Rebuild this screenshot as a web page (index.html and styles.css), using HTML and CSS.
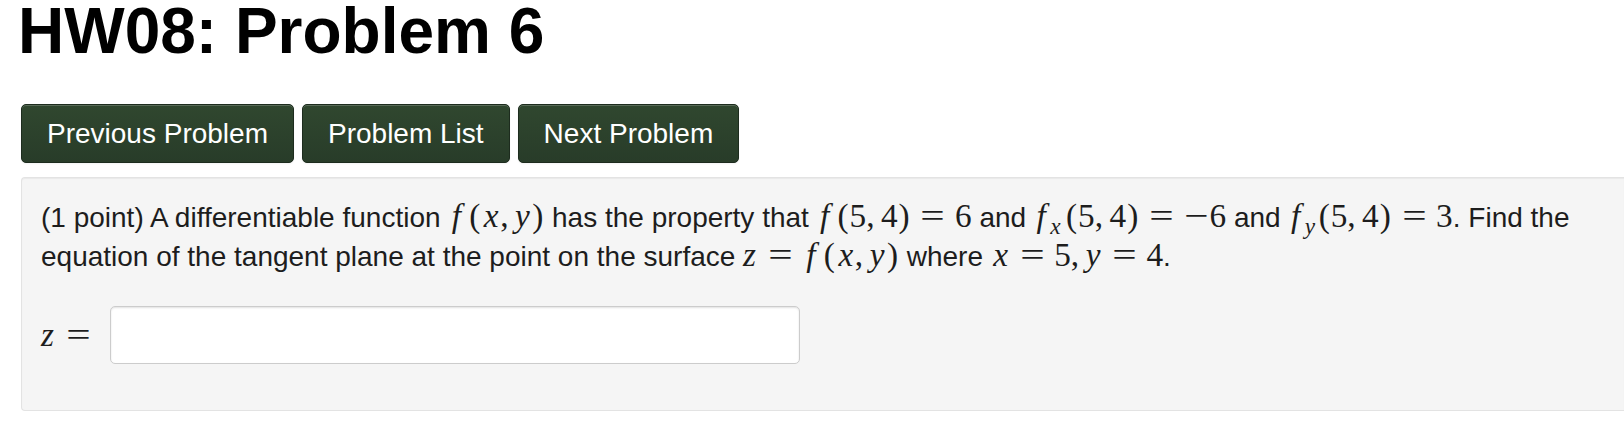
FILE: index.html
```html
<!DOCTYPE html>
<html lang="en">
<head>
    <meta charset="UTF-8">
    <title>HW08: Problem 6</title>
    <link rel="stylesheet" href="styles.css">
</head>
<body>
    <div class="page">
        <h1 class="title">HW08: Problem 6</h1>
        <div class="nav">
            <a class="btn" href="#">Previous Problem</a>
            <a class="btn" href="#">Problem List</a>
            <a class="btn" href="#">Next Problem</a>
        </div>
        <div class="well">
            <p class="prob">(1 point) A differentiable function <span class="m"><i class="f">f</i><span class="p">(</span><i class="x">x</i><span class="c">,</span><i class="y">y</i><span class="p">)</span></span> has the property that <span class="m"><i class="f">f</i><span class="p">(</span>5<span class="c">,</span>4<span class="p">)</span><span class="rel">=</span>6</span> and <span class="m"><i class="fs">f</i><sub class="sx"><i>x</i></sub><span class="p">(</span>5<span class="c">,</span>4<span class="p">)</span><span class="rel">=</span><span class="neg">&minus;</span>6</span> and <span class="m"><i class="fs">f</i><sub class="sy"><i>y</i></sub><span class="p">(</span>5<span class="c">,</span>4<span class="p">)</span><span class="rel">=</span>3</span>. Find the equation of the tangent plane at the point on the surface <span class="m"><i class="z">z</i><span class="rel">=</span><i class="f">f</i><span class="p">(</span><i class="x">x</i><span class="c">,</span><i class="y">y</i><span class="p">)</span></span> where <span class="m"><i class="x">x</i><span class="rel">=</span>5<span class="c">,</span><i class="y">y</i><span class="rel">=</span>4</span>.</p>
            <div class="answer">
                <span class="lbl"><span class="m"><i class="z">z</i><span class="rel">=</span></span></span>
                <input class="ans" type="text">
            </div>
        </div>
    </div>
</body>
</html>
```

FILE: styles.css
```css
html, body {
    margin: 0;
    background-color: #ffffff;
    overflow: hidden;
}
body {
    font-family: "Liberation Sans", Arial, sans-serif;
    color: #1d1d1d;
}
.page {
    padding-left: 21px;
}
.title {
    margin: 0 0 0 -3px;
    font-size: 64px;
    line-height: 62px;
    font-weight: bold;
    color: #000000;
}
.nav {
    display: flex;
    gap: 8px;
    margin-top: 42px;
}
.btn {
    display: block;
    padding: 1px 25px 0;
    font-size: 28px;
    line-height: 56px;
    color: #ffffff;
    text-decoration: none;
    background-color: #2c422d;
    background-image: linear-gradient(#30472f, #283c29);
    border: 1px solid #1d2c1e;
    border-radius: 5px;
    box-shadow: inset 0 1px 0 rgba(255, 255, 255, 0.2), 0 1px 2px rgba(0, 0, 0, 0.05);
}
.well {
    margin-top: 14px;
    padding: 20px 19px 46px;
    background-color: #f5f5f5;
    border: 1px solid #e3e3e3;
    border-right: 0;
    border-radius: 4px 0 0 4px;
    box-shadow: inset 0 1px 1px rgba(0, 0, 0, 0.05);
}
.prob {
    margin: 0;
    font-size: 28px;
    line-height: 39px;
}

/* math, laid out with TeX-like spacing */
.m {
    font-family: "Liberation Serif", "Times New Roman", serif;
    font-size: 33.3px;
    line-height: 0;
    white-space: nowrap;
}
.m i {
    font-style: italic;
}
.f { margin: 0 0.22em 0 0.1em; }
.fs { margin: 0 0.13em 0 0.08em; }
.p { padding: 0 0.028em; }
.x { margin: 0 0.05em 0 0.078em; }
.y { margin-right: 0.046em; }
.z { margin-right: 0.076em; }
.c { margin-right: 0.195em; }
.rel {
    display: inline-block;
    margin: 0 0.385em;
    transform: scaleX(1.3);
}
.neg {
    display: inline-block;
    margin: 0 0.107em;
    transform: scaleX(1.3);
}
.sx, .sy {
    font-size: 0.7em;
    vertical-align: -7px;
    line-height: 0;
}
.sx { margin-right: 0.2em; }
.sy { margin-right: 0.117em; }

.answer {
    display: flex;
    align-items: center;
    gap: 9px;
    margin-top: 30px;
}
.lbl {
    padding-top: 3px;
    font-size: 28px;
    line-height: 39px;
}
.ans {
    box-sizing: border-box;
    width: 690px;
    height: 58px;
    margin: 0;
    background-color: #ffffff;
    border: 1px solid #cccccc;
    border-radius: 5px;
    box-shadow: inset 0 1px 2px rgba(0, 0, 0, 0.12);
}
```
